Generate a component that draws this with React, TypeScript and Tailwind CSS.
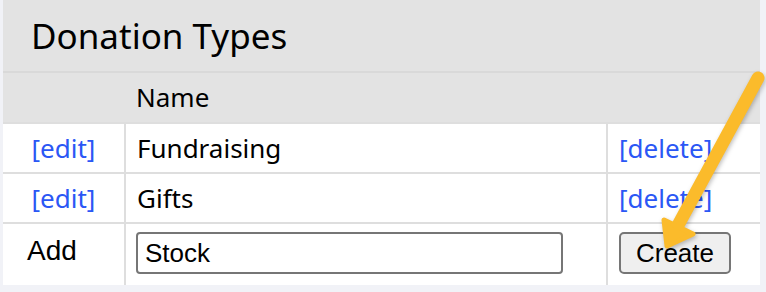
import React from "react";

const rows = [
  { id: 1, name: "Fundraising" },
  { id: 2, name: "Gifts" },
];

function Arrow() {
  return (
    <svg
      className="pointer-events-none absolute left-0 top-0 drop-shadow-[1px_2px_2px_rgba(0,0,0,0.25)]"
      width="766"
      height="292"
      viewBox="0 0 766 292"
    >
      <line
        x1="758"
        y1="78"
        x2="676"
        y2="229"
        stroke="#fbbb2b"
        strokeWidth="13"
        strokeLinecap="round"
      />
      <polygon
        points="667,246 664,220 693,234"
        fill="#fbbb2b"
        stroke="#fbbb2b"
        strokeWidth="5"
        strokeLinejoin="round"
      />
    </svg>
  );
}

export default function App() {
  return (
    <div className="relative h-[292px] w-[766px] overflow-hidden bg-[#f1f2f7] pl-[3px]">
      <div className="w-[757px] bg-white font-['Noto_Sans',sans-serif] text-[26px] text-black">
        <div className="flex h-[73px] items-center border-b-2 border-[#d9d9d9] bg-[#e3e3e3] pl-[28px] pt-[1px] text-[35px]">
          Donation Types
        </div>
        <table className="w-full border-collapse">
          <thead>
            <tr className="h-[50px] border-b-2 border-[#dedede] bg-[#e3e3e3] text-left">
              <th className="w-[122px] p-0 font-normal"></th>
              <th className="p-0 pl-[11px] font-normal">Name</th>
              <th className="w-[153px] p-0 font-normal"></th>
            </tr>
          </thead>
          <tbody>
            {rows.map((row) => (
              <tr key={row.id} className="h-[50px] border-b-2 border-[#dedede]">
                <td className="p-0 text-center text-[#2b57f5]">[edit]</td>
                <td className="border-l-2 border-[#dedede] p-0 pl-[11px]">{row.name}</td>
                <td className="border-l-2 border-[#dedede] p-0 pl-[11px] text-[#2b57f5]">
                  [delete]
                </td>
              </tr>
            ))}
            <tr className="h-[62px] align-top">
              <td className="p-0 pl-[24px] pt-[6px] font-['Liberation_Sans',Arial,sans-serif] text-[28px]">
                Add
              </td>
              <td className="border-l-2 border-[#dedede] p-0 pl-[10px] pt-[8px]">
                <input
                  defaultValue="Stock"
                  className="h-[42px] w-[427px] rounded-[4px] border-2 border-[#767676] bg-white px-[7px] font-['Liberation_Sans',Arial,sans-serif] text-[26px] text-black outline-none"
                />
              </td>
              <td className="border-l-2 border-[#dedede] p-0 pl-[11px] pt-[8px]">
                <button className="h-[42px] w-[112px] rounded-[5px] border-2 border-[#767676] bg-[#efefef] font-['Liberation_Sans',Arial,sans-serif] text-[26px] text-black">
                  Create
                </button>
              </td>
            </tr>
          </tbody>
        </table>
      </div>
      <Arrow />
    </div>
  );
}
